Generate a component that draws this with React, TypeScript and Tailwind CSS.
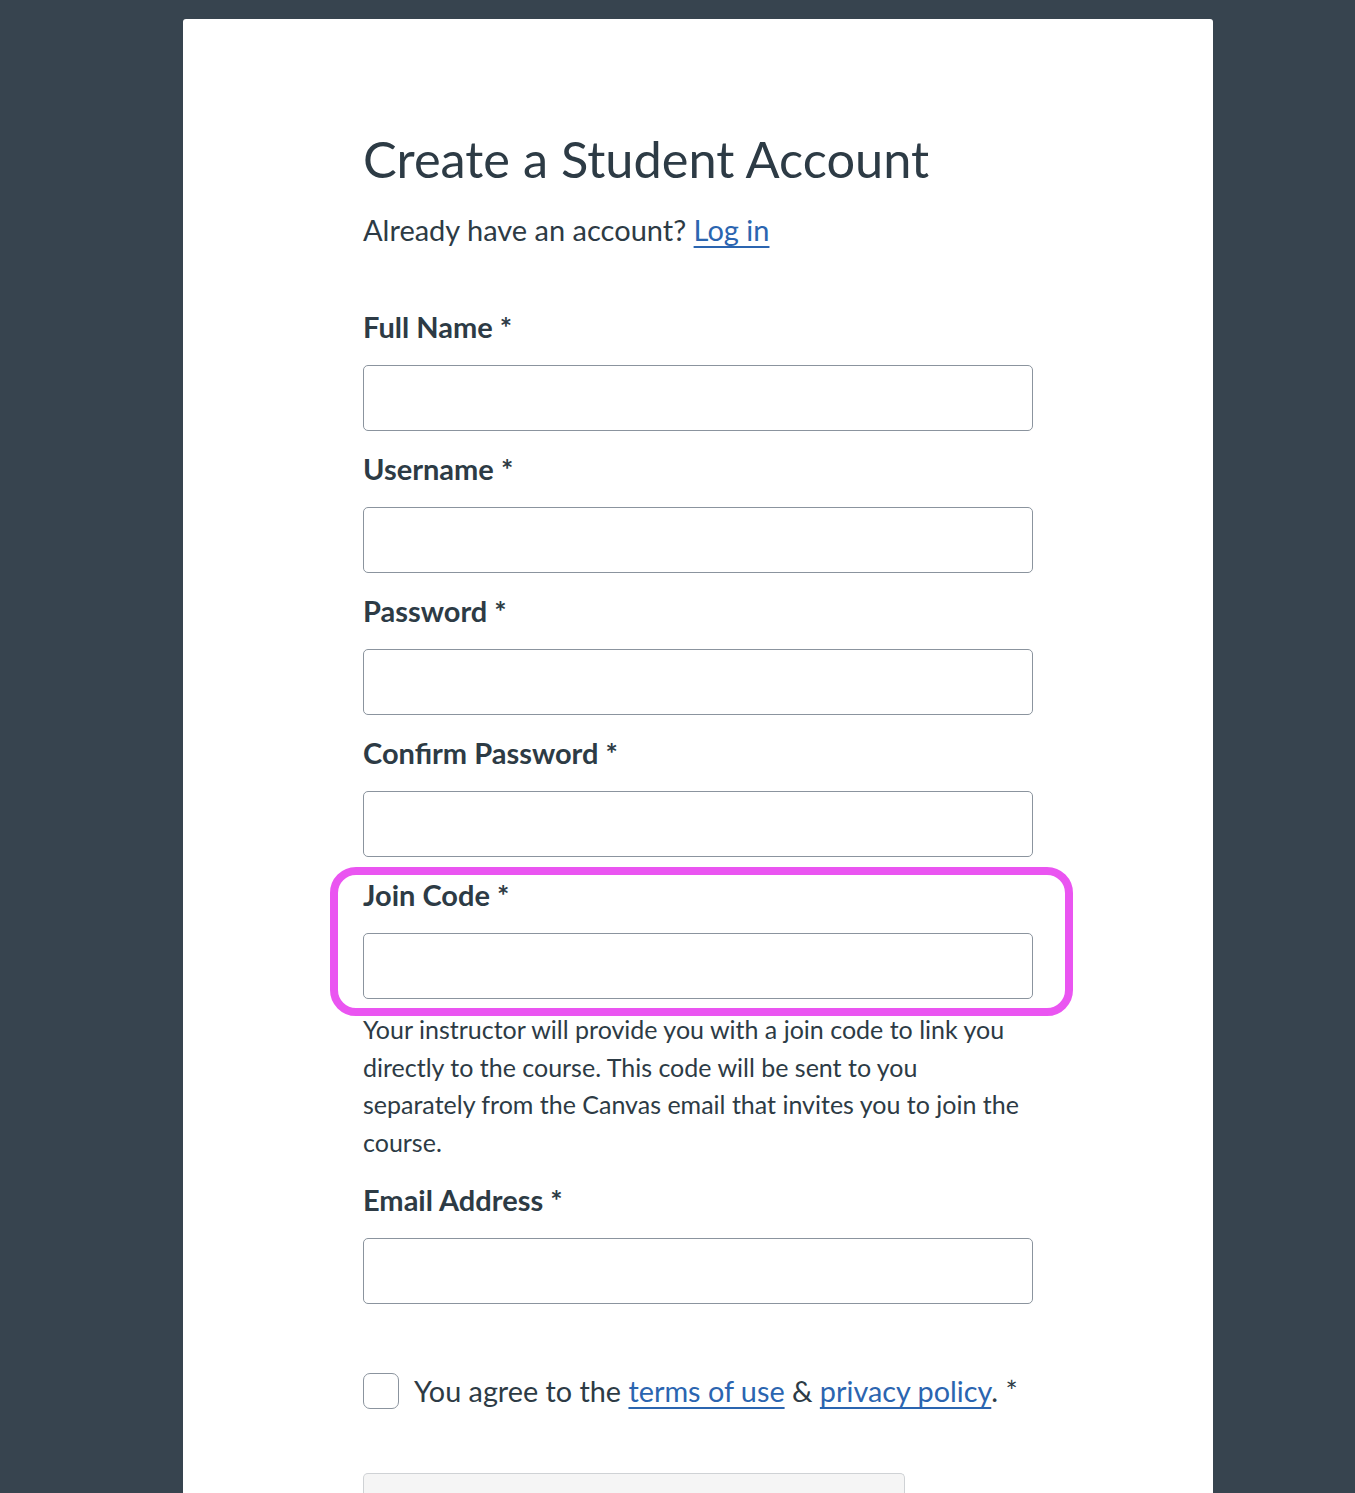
import React from 'react';

const fields = ['Full Name', 'Username', 'Password', 'Confirm Password'];

function Field({ label }: { label: string }) {
  return (
    <div className="flex flex-col">
      <label className="text-[29px] leading-[36px] font-bold text-[#2d3b45]">
        {label} <span className="font-bold">*</span>
      </label>
      <input
        type="text"
        className="mt-[20px] h-[66px] w-full rounded-[5px] border border-[#8b949e] bg-white"
      />
    </div>
  );
}

export default function App() {
  return (
    <div className="min-h-screen bg-[#37444f] flex pl-[183px] pt-[19px] font-['Lato','Liberation_Sans',sans-serif]">
      <div className="w-[1030px] min-h-[1474px] bg-white rounded-t-[3px] px-[180px] pt-[109px]">
        <h1 className="text-[50.5px] leading-[62px] text-[#2d3b45] font-normal">
          Create a Student Account
        </h1>
        <p className="mt-[20px] text-[29px] leading-[40px] text-[#2d3b45]">
          Already have an account?{' '}
          <a href="#" className="text-[#2b65b0] underline underline-offset-[5px] decoration-[2px]">
            Log in
          </a>
        </p>

        <div className="mt-[59px] flex flex-col gap-[20px]">
          {fields.map((f) => (
            <Field key={f} label={f} />
          ))}

          <div className="relative">
            <Field label="Join Code" />
            {/* highlight annotation */}
            <div className="pointer-events-none absolute left-[-33px] top-[-10px] w-[743px] h-[149px] rounded-[26px] border-[8px] border-[#ea55f1]" />
            <p className="mt-[12px] text-[25px] leading-[37.7px] text-[#2d3b45]">
              Your instructor will provide you with a join code to link you directly to the course. This code will be sent to you separately from the Canvas email that invites you to join the course.
            </p>
          </div>

          <Field label="Email Address" />
        </div>

        <div className="mt-[67px] flex items-center gap-[15px]">
          <span className="w-[36px] h-[36px] rounded-[7px] border border-[#8b949e] bg-white shrink-0" />
          <span className="text-[28.8px] leading-[40px] text-[#2d3b45]">
            You agree to the{' '}
            <a href="#" className="text-[#2b65b0] underline underline-offset-[5px] decoration-[2px]">
              terms of use
            </a>{' '}
            &amp;{' '}
            <a href="#" className="text-[#2b65b0] underline underline-offset-[5px] decoration-[2px]">
              privacy policy
            </a>
            . *
          </span>
        </div>

        <div className="mt-[62px] w-[542px] h-[60px] rounded-t-[5px] border border-b-0 border-[#cfd2d5] bg-[#f5f5f5]" />
      </div>
    </div>
  );
}
